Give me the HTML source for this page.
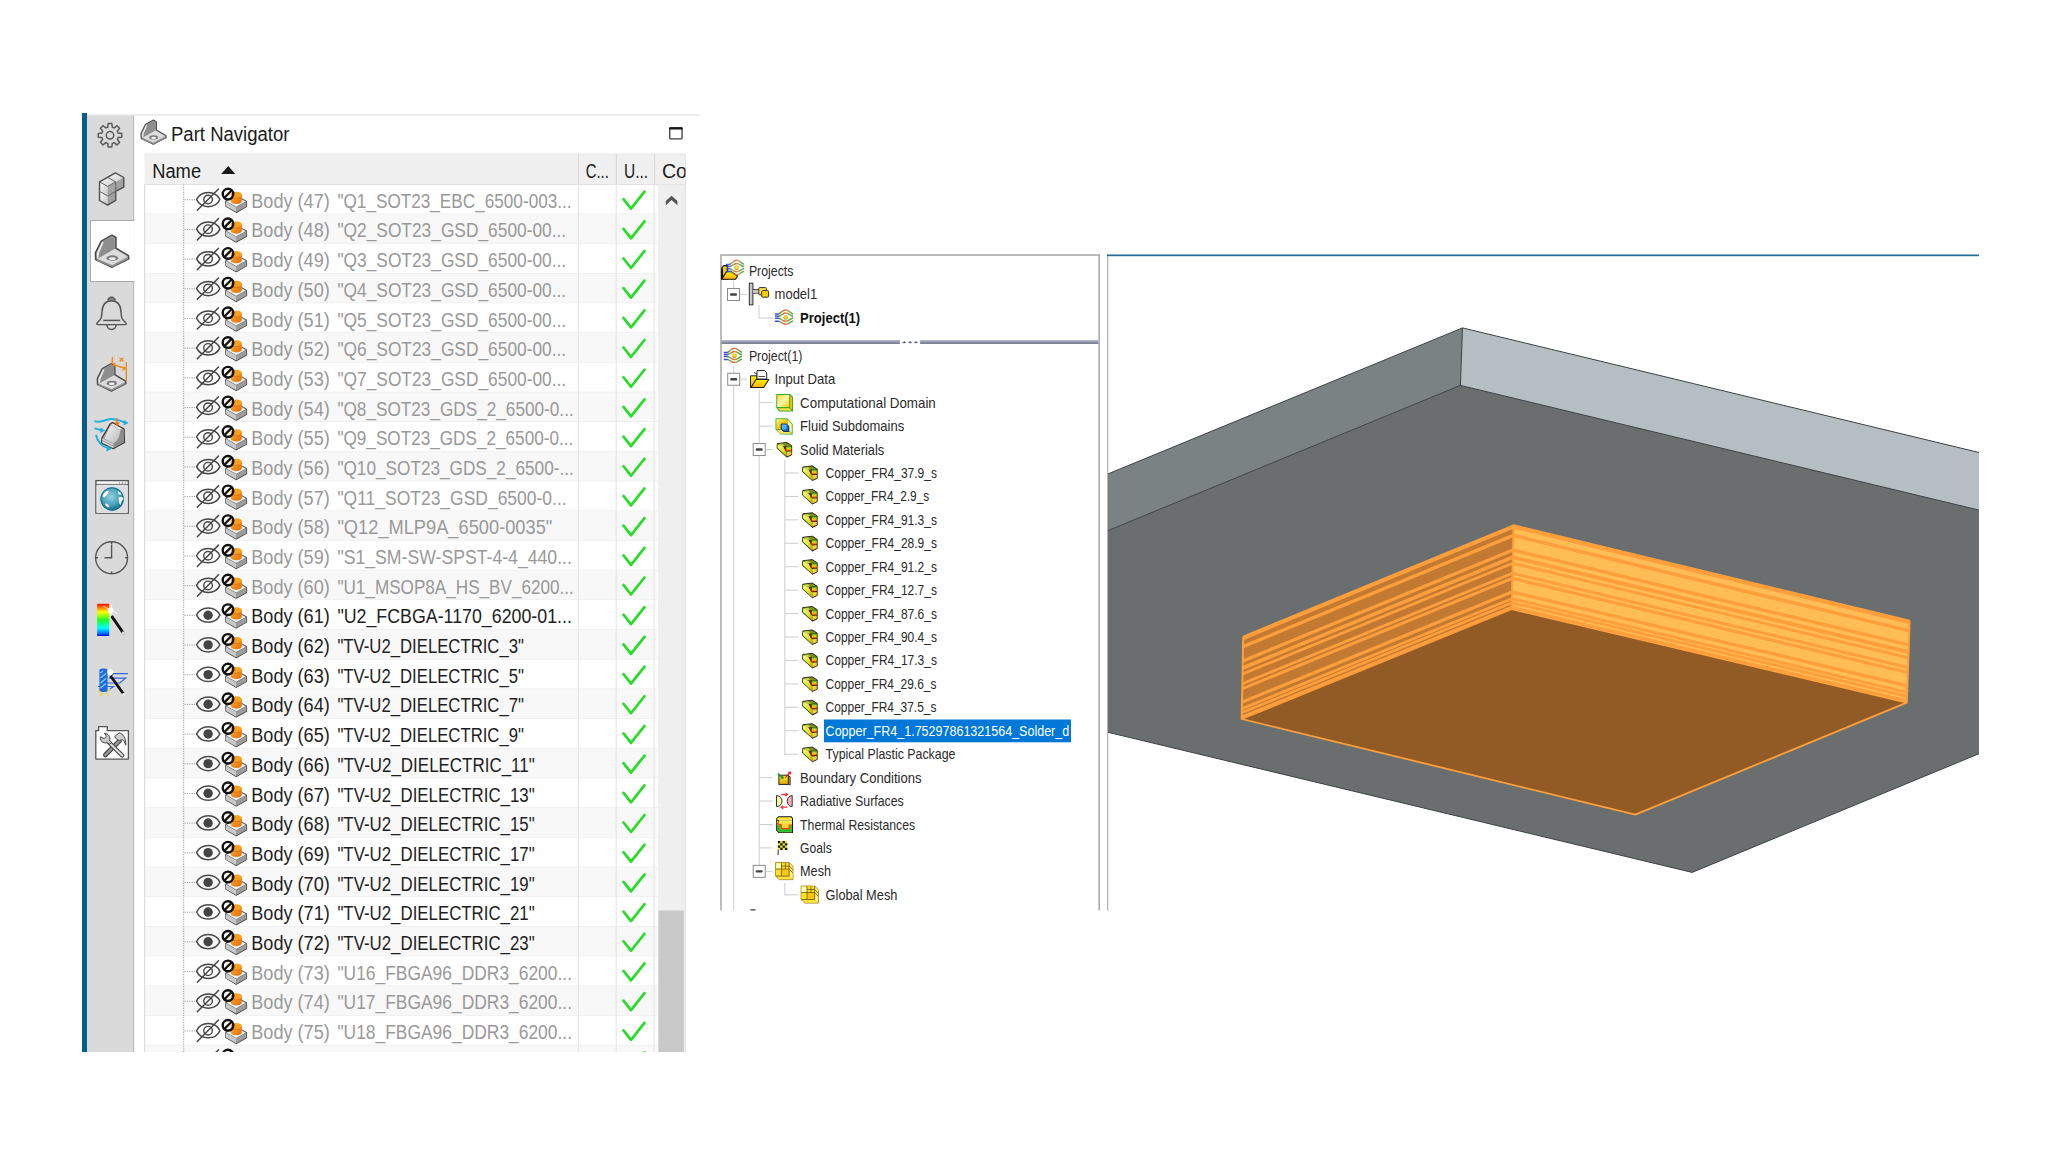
<!DOCTYPE html><html><head><meta charset="utf-8"><style>html,body{margin:0;padding:0;background:#fff;width:2048px;height:1152px;overflow:hidden}svg{display:block}text{font-family:'Liberation Sans', sans-serif}</style></head><body>
<svg width="2048" height="1152" viewBox="0 0 2048 1152" shape-rendering="geometricPrecision">

<defs>
 <linearGradient id="gOrange" x1="0" y1="0" x2="1" y2="1">
  <stop offset="0" stop-color="#ffb040"/><stop offset="1" stop-color="#e06a00"/>
 </linearGradient>
 <linearGradient id="gGrayTop" x1="0" y1="0" x2="1" y2="1">
  <stop offset="0" stop-color="#f4f4f4"/><stop offset="1" stop-color="#c8c8c8"/>
 </linearGradient>
 <linearGradient id="gYellow" x1="0" y1="0" x2="1" y2="1">
  <stop offset="0" stop-color="#fff8a0"/><stop offset="1" stop-color="#f0c000"/>
 </linearGradient>
 <linearGradient id="gGlobe" x1="0" y1="0" x2="1" y2="1">
  <stop offset="0" stop-color="#5fb8d0"/><stop offset="1" stop-color="#1a6f8a"/>
 </linearGradient>
 <linearGradient id="gRainbow" x1="0" y1="0" x2="0" y2="1">
  <stop offset="0" stop-color="#ff0000"/><stop offset="0.2" stop-color="#ffcc00"/>
  <stop offset="0.45" stop-color="#22ee22"/><stop offset="0.7" stop-color="#00d0ff"/>
  <stop offset="1" stop-color="#0020ff"/>
 </linearGradient>
 <!-- icons in absolute coords for row 0 (top=184.5) -->
 <g id="eyeH">
  <path d="M196.6,199.5 C201,190.0 215.5,190.0 219.9,199.5 C215.5,209.0 201,209.0 196.6,199.5 Z" fill="none" stroke="#444" stroke-width="1.5"/>
  <circle cx="208.05" cy="199.5" r="4.3" fill="none" stroke="#484848" stroke-width="1.4"/>
  <path d="M197.3,210.3 L218.5,188.9" stroke="#444" stroke-width="1.45" stroke-linecap="round"/>
 </g>
 <g id="eyeV">
  <path d="M196.6,199.5 C201,190.0 215.5,190.0 219.9,199.5 C215.5,209.0 201,209.0 196.6,199.5 Z" fill="none" stroke="#4a4a4a" stroke-width="1.5"/>
  <circle cx="208.1" cy="199.6" r="4.7" fill="#454545"/>
 </g>
 <g id="bodyIco">
  <path d="M225.8,201.3 L236,195.8 L246.5,201.5 L246.6,206.5 L236.2,212.4 L225.9,206.3 Z" fill="#9a9a9a" stroke="#3c3c3c" stroke-width="1.1" stroke-linejoin="round"/>
  <path d="M225.8,201.3 L236,195.8 L246.5,201.5 L236.2,207.2 Z" fill="#edf2f4" stroke="#555" stroke-width="0.7" stroke-linejoin="round"/>
  <path d="M225.9,201.6 L236.2,207.4 L236.2,212.1 L225.9,206.3 Z" fill="#c8c8c8"/>
  <path d="M236.2,207.4 L246.4,201.7 L246.5,206.4 L236.2,212.1 Z" fill="#9c9c9c"/>
  <path d="M230.8,194.5 L230.8,201.2 A5.5,2.8 0 0 0 241.8,201.2 L241.8,194.5 Z" fill="url(#gOrange)"/>
  <ellipse cx="236.3" cy="194.5" rx="5.5" ry="2.8" fill="#f9a020"/>
  <path d="M230.9,196.6 A5.5,2.4 0 0 0 241.7,196.6" fill="none" stroke="#d86f00" stroke-width="0.7"/>
  <circle cx="228.0" cy="194.1" r="5.3" fill="none" stroke="#111" stroke-width="2.4"/>
  <path d="M224.4,197.7 L231.6,190.5" stroke="#111" stroke-width="2.3"/>
 </g>
 <g id="check">
  <path d="M0.5,8 L8,17.5 L21.5,0.5" fill="none" stroke="#28dc28" stroke-width="2.7" stroke-linecap="round" stroke-linejoin="round"/>
 </g>
 <!-- material icon: origin so that bbox ~ (0,0)-(15,15.3) -->
 <linearGradient id="gMatL" x1="0" y1="0" x2="1" y2="1">
  <stop offset="0" stop-color="#f4ff90"/><stop offset="0.6" stop-color="#d8e820"/><stop offset="1" stop-color="#b0a000"/>
 </linearGradient>
 <linearGradient id="gMatF" x1="0" y1="0" x2="0" y2="1">
  <stop offset="0" stop-color="#108010"/><stop offset="0.35" stop-color="#a0d020"/><stop offset="0.6" stop-color="#ffd000"/><stop offset="0.85" stop-color="#f05000"/><stop offset="1" stop-color="#801000"/>
 </linearGradient>
 <g id="matIco">
  <path d="M0.6,1.3 L10.1,0.2 L15,3.4 L15,12.6 L10.2,14.9 L0.4,6.0 Z" fill="#1a1400" stroke="#1a1400" stroke-width="0.8" stroke-linejoin="round"/>
  <path d="M1,1.6 L10,0.7 L14.5,3.5 L6.8,4.2 Z" fill="#7a9020"/>
  <path d="M2,1.8 L6,1.4 L8,3.5 L4,3.8 Z" fill="#c8d840"/>
  <path d="M0.9,1.9 L6.6,4.3 L9.8,9.3 L9.8,14.3 L0.8,5.8 Z" fill="url(#gMatL)"/>
  <path d="M6.8,4.3 L9.3,3.9 L9.3,9.0 L8.8,9.0 Z" fill="#8a0c0c"/>
  <path d="M9.5,3.8 L14.6,3.5 L14.6,8.7 L9.5,9.0 Z" fill="url(#gMatF)"/>
  <path d="M9.9,9.5 L14.6,9.1 L14.6,12.3 L10.1,14.3 Z" fill="#f0d040"/>
 </g>
 <linearGradient id="gFold" x1="0" y1="0" x2="0" y2="1">
  <stop offset="0" stop-color="#fff200"/><stop offset="1" stop-color="#ffb000"/>
 </linearGradient>
 <g id="expander">
  <rect x="0.5" y="0.5" width="12" height="12" fill="#fff" stroke="#8a8a8a" stroke-width="1"/>
  <rect x="3" y="5.3" width="7" height="2.4" rx="1" fill="#444"/>
 </g>
 <linearGradient id="gStream" gradientUnits="userSpaceOnUse" x1="0" y1="0" x2="17.5" y2="0">
  <stop offset="0" stop-color="#4040e0"/><stop offset="0.17" stop-color="#4848e0"/><stop offset="0.24" stop-color="#40a040"/>
  <stop offset="0.38" stop-color="#a0b040"/><stop offset="0.5" stop-color="#f04838"/><stop offset="0.64" stop-color="#f08838"/><stop offset="0.82" stop-color="#60a848"/><stop offset="1" stop-color="#40a040"/>
 </linearGradient>
 <radialGradient id="gBall" cx="0.5" cy="0.45" r="0.5"><stop offset="0" stop-color="#ffff20"/><stop offset="0.6" stop-color="#f0d000"/><stop offset="1" stop-color="#b08000"/></radialGradient>
 <g id="projIco">
  <g fill="none" stroke="url(#gStream)" stroke-width="1.5" stroke-linecap="round">
   <path d="M0.3,4.1 L3,4.1 C5,4.1 7,-0.1 10.4,-0.1 C13.5,-0.1 15.5,3.2 17.3,3.7"/>
   <path d="M0.3,6.1 L3.2,6.2 C5.5,6.2 7.5,3.1 10.4,3.1 C13.5,3.1 15.5,5.8 17.3,6.2"/>
   <path d="M0.3,8.3 L3.2,8.3 C5.5,8.3 7.5,11.3 10.4,11.3 C13.5,11.3 15.5,8.6 17.3,8.3"/>
   <path d="M0.3,11.2 L3.2,11.2 C5.5,11.2 7.5,14.3 10.4,14.3 C13.5,14.3 15.5,11.6 17.3,11.1"/>
  </g>
  <circle cx="10.4" cy="7.4" r="2.2" fill="url(#gBall)"/>
 </g>
</defs>

<rect width="2048" height="1152" fill="#ffffff"/>
<rect x="87" y="114.4" width="613" height="1.2" fill="#e2e2e2"/>
<rect x="82" y="113" width="5" height="939" fill="#035f87"/>
<rect x="87" y="115.6" width="47" height="936.4" fill="#dadada"/>
<rect x="133" y="115.6" width="1.2" height="936.4" fill="#bdbdbd"/>
<path d="M134.5,220.5 L90.5,220.5 L90.5,281.5 L134.5,281.5" fill="#ffffff" stroke="#ababab" stroke-width="1"/>
<path d="M107.76,127.21 L108.14,123.55 L111.86,123.55 L112.24,127.21 A8.4,8.4 0 0 1 114.14,127.99 L114.14,127.99 L116.99,125.67 L119.63,128.31 L117.31,131.16 A8.4,8.4 0 0 1 118.09,133.06 L118.09,133.06 L121.75,133.44 L121.75,137.16 L118.09,137.54 A8.4,8.4 0 0 1 117.31,139.44 L117.31,139.44 L119.63,142.29 L116.99,144.93 L114.14,142.61 A8.4,8.4 0 0 1 112.24,143.39 L112.24,143.39 L111.86,147.05 L108.14,147.05 L107.76,143.39 A8.4,8.4 0 0 1 105.86,142.61 L105.86,142.61 L103.01,144.93 L100.37,142.29 L102.69,139.44 A8.4,8.4 0 0 1 101.91,137.54 L101.91,137.54 L98.25,137.16 L98.25,133.44 L101.91,133.06 A8.4,8.4 0 0 1 102.69,131.16 L102.69,131.16 L100.37,128.31 L103.01,125.67 L105.86,127.99 A8.4,8.4 0 0 1 107.76,127.21 Z" fill="none" stroke="#5a5a5a" stroke-width="1.45" stroke-linejoin="round"/><circle cx="110" cy="135.3" r="3.75" fill="none" stroke="#5a5a5a" stroke-width="1.45"/>
<g stroke-linejoin="round">
<linearGradient id="gCubeL" x1="0" y1="0" x2="1" y2="1"><stop offset="0" stop-color="#fafafa"/><stop offset="1" stop-color="#c8c8c8"/></linearGradient>
<linearGradient id="gCubeT" x1="0" y1="0" x2="1" y2="1"><stop offset="0" stop-color="#f4f4f4"/><stop offset="1" stop-color="#d2d2d2"/></linearGradient>
<path d="M99.5,181.9 L107.6,177.4 L115.7,181.9 L107.7,186.4 Z" fill="url(#gCubeT)"/>
<path d="M107.6,177.4 L115.4,172.8 L123.8,177.5 L115.7,181.9 Z" fill="url(#gCubeT)"/>
<path d="M99.5,181.9 L107.7,186.4 L107.7,195.9 L99.5,191.4 Z" fill="url(#gCubeL)"/>
<path d="M107.7,186.4 L115.7,181.9 L115.7,191.4 L107.7,195.9 Z" fill="#a4a4a4"/>
<path d="M115.7,181.9 L123.8,177.5 L123.8,187.1 L115.7,191.4 Z" fill="#a0a0a0"/>
<path d="M99.5,191.4 L107.7,195.9 L107.7,205.2 L99.5,200.5 Z" fill="url(#gCubeL)"/>
<path d="M107.7,195.9 L115.7,191.4 L115.8,200.3 L107.7,205.2 Z" fill="#a0a0a0"/>
<path d="M99.5,181.9 L115.4,172.8 L123.8,177.5 L123.8,187.1 L115.7,191.4 L115.8,200.3 L107.7,205.2 L99.5,200.5 Z" fill="none" stroke="#505050" stroke-width="1.4"/>
<path d="M107.6,177.4 L115.7,181.9 L107.7,186.4 L99.5,181.9 M115.7,181.9 L115.7,191.4 M99.5,191.4 L107.7,195.9 L115.7,191.4" fill="none" stroke="#686868" stroke-width="1"/>
</g>
<g transform="translate(95.3,235) scale(1.33)"><path d="M12.5,0.1 L15.5,1.9 L15.5,9.9 L24.9,15.5 L25.2,17.8 L15.7,22.5 L12.5,24.3 L0.3,18.4 L0.1,13.4 L4.5,4.6 Z" fill="#b8b8b8" stroke="#4a4a4a" stroke-width="1.2" stroke-linejoin="round"/>
<path d="M4.8,5 L12.6,0.9 L14.6,2.2 L14.6,10.6 L2.6,17.6 L1.2,13.6 Z" fill="#8e8e8e"/>
<path d="M1.3,13.3 L5,5.4 L6.4,5.3 L2.8,13.6 L2.4,17 L1.3,17 Z" fill="#eeeeee"/>
<path d="M1.6,17.8 L14.6,10.6 L24,16 L12.8,22.6 Z" fill="#dcdcdc"/>
<path d="M1,18.6 L12.6,23.5 L24.6,17.6" fill="none" stroke="#8a8a8a" stroke-width="1.2"/>
<ellipse cx="12.8" cy="17.4" rx="4.4" ry="2.1" fill="#7a7a7a"/>
<ellipse cx="12.8" cy="17.9" rx="2.5" ry="1.1" fill="#f4f4f4"/></g>
<g fill="none" stroke="#555" stroke-width="1.45" stroke-linejoin="round">
<path d="M107.9,300.6 A3.6,3.4 0 0 1 115.1,300.6" fill="#8a8a8a"/>
<path d="M111.5,300.8 C104.2,300.8 102.3,306 102,312 C101.7,317 101.4,318.8 98.5,321.6 C95.8,324.2 96.4,324.6 98.6,324.6 L124.4,324.6 C126.6,324.6 127.2,324.2 124.5,321.6 C121.6,318.8 121.3,317 121,312 C120.7,306 118.8,300.8 111.5,300.8 Z"/>
<path d="M103.2,320.4 L120.2,320.4" stroke-width="1.5"/>
<path d="M107,325 A4.5,4.4 0 0 0 116,325"/>
</g>
<g transform="translate(97.2,363.4) scale(1.14)"><path d="M12.5,0.1 L15.5,1.9 L15.5,9.9 L24.9,15.5 L25.2,17.8 L15.7,22.5 L12.5,24.3 L0.3,18.4 L0.1,13.4 L4.5,4.6 Z" fill="#b8b8b8" stroke="#4a4a4a" stroke-width="1.2" stroke-linejoin="round"/>
<path d="M4.8,5 L12.6,0.9 L14.6,2.2 L14.6,10.6 L2.6,17.6 L1.2,13.6 Z" fill="#8e8e8e"/>
<path d="M1.3,13.3 L5,5.4 L6.4,5.3 L2.8,13.6 L2.4,17 L1.3,17 Z" fill="#eeeeee"/>
<path d="M1.6,17.8 L14.6,10.6 L24,16 L12.8,22.6 Z" fill="#dcdcdc"/>
<path d="M1,18.6 L12.6,23.5 L24.6,17.6" fill="none" stroke="#8a8a8a" stroke-width="1.2"/>
<ellipse cx="12.8" cy="17.4" rx="4.4" ry="2.1" fill="#7a7a7a"/>
<ellipse cx="12.8" cy="17.9" rx="2.5" ry="1.1" fill="#f4f4f4"/></g>
<g stroke="#f08a20" stroke-width="1.4" fill="none">
<path d="M112.4,357 L112.4,364"/><path d="M126.3,362 L126.3,381"/>
<path d="M113,364.5 L125.5,368.5"/><path d="M113,364.5 L115.5,362.8 M113,364.5 L115.8,366.2 M125.5,368.5 L122.8,366.8 M125.5,368.5 L122.6,370.1"/>
<path d="M119.6,357.8 L123.4,361.4 M123.4,357.8 L119.6,361.4"/>
</g>
<g>
<linearGradient id="gFlowF" x1="0" y1="0" x2="1" y2="1"><stop offset="0" stop-color="#f8f8f8"/><stop offset="1" stop-color="#b8b8b8"/></linearGradient>
<path d="M110.2,423.9 L112.4,422.6 L124.1,429 L124.5,442.5 L113.2,448.7 L101.5,443.2 L101.9,438.1 Z" fill="#a8a8a8" stroke="#3a3a3a" stroke-width="1.2" stroke-linejoin="round"/>
<path d="M119.6,431 L123.6,429.6 L123.8,442 L113.6,447.8 L113.6,443.4 Z" fill="#8c8c8c"/>
<path d="M111.2,425.2 L120.2,430.4 C119.6,436 118.4,440.4 113.4,443.2 L104.6,438.6 C107,434 108.2,428.4 111.2,425.2 Z" fill="url(#gFlowF)"/>
<path d="M102.6,438.8 L113.2,444.4 L113.2,447.8 L102.4,442.6 Z" fill="#e4e4e4"/>
<path d="M102.6,440.6 L113.2,446" stroke="#666" stroke-width="0.7"/>
<path d="M111,424.4 L112.6,423.4 L121.6,428.6 L120,429.8 Z" fill="#ececec"/>
<path d="M95.2,421.4 C100,423.2 105,419.6 110.5,419 C115.5,418.6 120.5,420.6 125.5,422.8" fill="none" stroke="#22b0de" stroke-width="2" stroke-linecap="round"/>
<path d="M123.8,420 L128.6,423 L123.6,425.6 Z" fill="#22b0de"/>
<path d="M95.4,428.6 L102,430.2" stroke="#22b0de" stroke-width="2" stroke-linecap="round"/>
<path d="M100.6,427.4 L105.2,430.6 L100.2,433 Z" fill="#22b0de"/>
<path d="M96.2,435.4 C97.4,441.6 101.2,446.2 108.6,448.4" fill="none" stroke="#22b0de" stroke-width="2" stroke-linecap="round"/>
<path d="M107,445.8 L112.2,448.6 L106.4,451.8 Z" fill="#22b0de"/>
<path d="M117,418.2 L117,424" stroke="#f08020" stroke-width="1.8"/>
<path d="M114.2,422.4 L117,426.4 L119.8,422.4 Z" fill="#f07010"/>
</g>
<g>
<rect x="95.9" y="480.6" width="32.4" height="32.6" fill="#dedede" stroke="#555" stroke-width="1.3"/>
<rect x="97" y="481.6" width="30.2" height="2.6" fill="#f0f0f0"/>
<path d="M95.9,484.8 L128.3,484.8" stroke="#555" stroke-width="1.1"/>
<path d="M119,482.9 h1.2 M121.8,482.9 h1.2 M124.6,482.9 h1.2" stroke="#666" stroke-width="1"/>
<rect x="97" y="485.6" width="30.2" height="26.8" fill="none" stroke="#f2f2f2" stroke-width="0.8"/>
<radialGradient id="gGl2" cx="0.45" cy="0.4" r="0.6"><stop offset="0" stop-color="#9ad0e0"/><stop offset="0.6" stop-color="#4aa0bc"/><stop offset="1" stop-color="#126a8a"/></radialGradient>
<circle cx="112.1" cy="499" r="11.7" fill="url(#gGl2)"/>
<circle cx="112.1" cy="499" r="11.2" fill="none" stroke="#1a7090" stroke-width="1"/>
<path d="M102.5,496.5 C103.5,492.5 106,490.5 109,491 L107.5,494 L104.5,497.5 Z" fill="#ffffff"/>
<path d="M118.5,497.5 C120.5,496 123,496.5 123.5,499 L121.5,501.5 L120.5,505 L119,503 Z" fill="#e8f4f8"/>
<path d="M106,503 L109.5,506 L108,507.5 L105,505 Z" fill="#f0f8fa"/>
<path d="M117.5,491 L120.5,492.5 L121.5,495 L118.5,494.5 Z" fill="#d8eef4"/>
</g>
<g fill="none" stroke="#555" stroke-width="1.4">
<circle cx="111.6" cy="557.7" r="16"/>
<path d="M111.6,544.5 L111.6,557.7 L104.5,557.7"/>
<path d="M111.6,541.7 L111.6,544 M111.6,571.4 L111.6,573.7 M95.6,557.7 L98,557.7 M125.2,557.7 L127.6,557.7"/>
</g>
<linearGradient id="gRb2" x1="0" y1="0" x2="0" y2="1">
<stop offset="0" stop-color="#ff1000"/><stop offset="0.13" stop-color="#ff8000"/><stop offset="0.25" stop-color="#ffff00"/>
<stop offset="0.5" stop-color="#20ff20"/><stop offset="0.75" stop-color="#00ffff"/><stop offset="0.9" stop-color="#0080ff"/><stop offset="1" stop-color="#0010f0"/></linearGradient>
<rect x="97.1" y="603.8" width="12.1" height="32.2" fill="url(#gRb2)"/>
<path d="M111.5,616 L123,632.5" stroke="#111" stroke-width="3" stroke-linecap="butt"/>
<circle cx="123.4" cy="633.2" r="1.6" fill="#f0f0f0" stroke="#999" stroke-width="0.6"/>
<circle cx="110.8" cy="610.5" r="3" fill="#ffffff" opacity="0.95"/>
<path d="M103,606 L118,614 M112,604 L110,618" stroke="#ffffff" stroke-width="1" opacity="0.7"/>
<g>
<path d="M113.5,673.6 L128,673.6 M113.5,673.6 L109.5,678.2 L125.6,678.2 L119.8,683 L106.6,683 M108.2,686.5 L98,686.5 M108.2,686.5 L113.5,686.5 L110,689" fill="none" stroke="#3068d8" stroke-width="1.2"/>
<path d="M99.4,670 C99.4,668 107.6,668 107.6,670 L107.6,690.5 C107.6,692.5 99.4,692.5 99.4,690.5 Z" fill="#2468e0"/>
<path d="M100.5,673 L103,671 M100.5,678 L106,673.5 M100.5,683 L106,678.5 M100.5,688 L106,683.5" stroke="#70d8ff" stroke-width="1.3"/>
<path d="M110.6,676 L123.6,694" stroke="#111" stroke-width="2.8"/>
<circle cx="123.6" cy="694.4" r="1.4" fill="#f4f4f4"/>
<circle cx="110.2" cy="672" r="3" fill="#ffffff" opacity="0.9"/>
<path d="M98,690.5 L101,692 M100,695.5 L103,693 M106,693 L108.5,695.5 M108,691 L110.5,690" stroke="#f0d020" stroke-width="1.3"/>
</g>
<g>
<path d="M95.8,730.6 L98.6,730.6 L98.6,726.6 L107.3,726.6 L107.3,730.6 L128.4,730.6 L128.4,759.1 L95.8,759.1 Z" fill="#ffffff" stroke="#555" stroke-width="1.3" stroke-linejoin="round"/>
<path d="M105.3,755 L119.5,740.8" stroke="#444" stroke-width="4.6" stroke-linecap="round"/>
<path d="M105.3,755 L119.5,740.8" stroke="#9a9a9a" stroke-width="2.4" stroke-linecap="round"/>
<path d="M108.5,742 L122.2,755.5" stroke="#444" stroke-width="4.4" stroke-linecap="round"/>
<path d="M108.5,742 L122.2,755.5" stroke="#dcdcdc" stroke-width="2.2" stroke-linecap="round"/>
<path d="M100.4,736.8 C99.8,741.2 103.2,743.8 107,742.6 L109.6,744.4 L111.4,742.4 L109.6,740.6 C110.8,737 108.6,733.6 104.4,733.2 L106.4,736.2 L104.2,738.6 Z" fill="#c8c8c8" stroke="#444" stroke-width="1"/>
<path d="M114.6,736.6 L119.2,732.8 C123,734 126,737.5 125.8,745.2 L123.8,740.6 C122,739.2 120.5,739.5 119.6,740.8 L116.6,739.2 Z" fill="#d0d0d0" stroke="#444" stroke-width="1"/>
</g>
<g transform="translate(140.9,120)"><path d="M12.5,0.1 L15.5,1.9 L15.5,9.9 L24.9,15.5 L25.2,17.8 L15.7,22.5 L12.5,24.3 L0.3,18.4 L0.1,13.4 L4.5,4.6 Z" fill="#b8b8b8" stroke="#4a4a4a" stroke-width="1.2" stroke-linejoin="round"/>
<path d="M4.8,5 L12.6,0.9 L14.6,2.2 L14.6,10.6 L2.6,17.6 L1.2,13.6 Z" fill="#8e8e8e"/>
<path d="M1.3,13.3 L5,5.4 L6.4,5.3 L2.8,13.6 L2.4,17 L1.3,17 Z" fill="#eeeeee"/>
<path d="M1.6,17.8 L14.6,10.6 L24,16 L12.8,22.6 Z" fill="#dcdcdc"/>
<path d="M1,18.6 L12.6,23.5 L24.6,17.6" fill="none" stroke="#8a8a8a" stroke-width="1.2"/>
<ellipse cx="12.8" cy="17.4" rx="4.4" ry="2.1" fill="#7a7a7a"/>
<ellipse cx="12.8" cy="17.9" rx="2.5" ry="1.1" fill="#f4f4f4"/></g>
<text x="171" y="140.6" font-size="19.6" fill="#1a1a1a" textLength="118.5" lengthAdjust="spacingAndGlyphs">Part Navigator</text>
<rect x="669.75" y="127.85" width="12.3" height="11.1" rx="1" fill="none" stroke="#3a3a3a" stroke-width="1.3"/><rect x="669.1" y="127.2" width="13.6" height="2.3" rx="0.8" fill="#151515"/>
<rect x="144.5" y="154" width="541" height="30.5" fill="#f0f0f0"/>
<rect x="144.5" y="153.6" width="541" height="1" fill="#e4e4e4"/><rect x="684.9" y="154" width="1" height="30.5" fill="#e4e4e4"/>
<rect x="144.5" y="184" width="541" height="1.8" fill="#d9d9d9"/>
<rect x="577.8" y="154" width="1.2" height="30" fill="#dadada"/>
<rect x="615.8" y="154" width="1.2" height="30" fill="#dadada"/>
<rect x="654.0" y="154" width="1.2" height="30" fill="#dadada"/>
<text x="152.2" y="177.9" font-size="19.6" fill="#1a1a1a" textLength="48.9" lengthAdjust="spacingAndGlyphs">Name</text>
<path d="M221.2,173.9 L228.25,166 L235.3,173.9 Z" fill="#1a1a1a"/>
<text x="585.7" y="177.9" font-size="19.6" fill="#1a1a1a" textLength="23.1" lengthAdjust="spacingAndGlyphs">C...</text>
<text x="624" y="177.9" font-size="19.6" fill="#1a1a1a" textLength="24.1" lengthAdjust="spacingAndGlyphs">U...</text>
<clipPath id="cpCo"><rect x="655" y="150" width="30.5" height="40"/></clipPath>
<text x="661.9" y="177.9" font-size="19.6" fill="#1a1a1a" clip-path="url(#cpCo)">Co</text>
<clipPath id="cpRows"><rect x="144" y="184.5" width="542" height="867.5"/></clipPath>
<g clip-path="url(#cpRows)">
<rect x="144.5" y="184.50" width="513" height="29.686" fill="#ffffff"/>
<rect x="144.5" y="213.59" width="513" height="1.2" fill="#ebebeb"/>
<rect x="144.5" y="214.19" width="513" height="29.686" fill="#f8f8f8"/>
<rect x="144.5" y="243.27" width="513" height="1.2" fill="#ebebeb"/>
<rect x="144.5" y="243.87" width="513" height="29.686" fill="#ffffff"/>
<rect x="144.5" y="272.96" width="513" height="1.2" fill="#ebebeb"/>
<rect x="144.5" y="273.56" width="513" height="29.686" fill="#f8f8f8"/>
<rect x="144.5" y="302.64" width="513" height="1.2" fill="#ebebeb"/>
<rect x="144.5" y="303.24" width="513" height="29.686" fill="#ffffff"/>
<rect x="144.5" y="332.33" width="513" height="1.2" fill="#ebebeb"/>
<rect x="144.5" y="332.93" width="513" height="29.686" fill="#f8f8f8"/>
<rect x="144.5" y="362.02" width="513" height="1.2" fill="#ebebeb"/>
<rect x="144.5" y="362.62" width="513" height="29.686" fill="#ffffff"/>
<rect x="144.5" y="391.70" width="513" height="1.2" fill="#ebebeb"/>
<rect x="144.5" y="392.30" width="513" height="29.686" fill="#f8f8f8"/>
<rect x="144.5" y="421.39" width="513" height="1.2" fill="#ebebeb"/>
<rect x="144.5" y="421.99" width="513" height="29.686" fill="#ffffff"/>
<rect x="144.5" y="451.07" width="513" height="1.2" fill="#ebebeb"/>
<rect x="144.5" y="451.67" width="513" height="29.686" fill="#f8f8f8"/>
<rect x="144.5" y="480.76" width="513" height="1.2" fill="#ebebeb"/>
<rect x="144.5" y="481.36" width="513" height="29.686" fill="#ffffff"/>
<rect x="144.5" y="510.45" width="513" height="1.2" fill="#ebebeb"/>
<rect x="144.5" y="511.05" width="513" height="29.686" fill="#f8f8f8"/>
<rect x="144.5" y="540.13" width="513" height="1.2" fill="#ebebeb"/>
<rect x="144.5" y="540.73" width="513" height="29.686" fill="#ffffff"/>
<rect x="144.5" y="569.82" width="513" height="1.2" fill="#ebebeb"/>
<rect x="144.5" y="570.42" width="513" height="29.686" fill="#f8f8f8"/>
<rect x="144.5" y="599.50" width="513" height="1.2" fill="#ebebeb"/>
<rect x="144.5" y="600.10" width="513" height="29.686" fill="#ffffff"/>
<rect x="144.5" y="629.19" width="513" height="1.2" fill="#ebebeb"/>
<rect x="144.5" y="629.79" width="513" height="29.686" fill="#f8f8f8"/>
<rect x="144.5" y="658.88" width="513" height="1.2" fill="#ebebeb"/>
<rect x="144.5" y="659.48" width="513" height="29.686" fill="#ffffff"/>
<rect x="144.5" y="688.56" width="513" height="1.2" fill="#ebebeb"/>
<rect x="144.5" y="689.16" width="513" height="29.686" fill="#f8f8f8"/>
<rect x="144.5" y="718.25" width="513" height="1.2" fill="#ebebeb"/>
<rect x="144.5" y="718.85" width="513" height="29.686" fill="#ffffff"/>
<rect x="144.5" y="747.93" width="513" height="1.2" fill="#ebebeb"/>
<rect x="144.5" y="748.53" width="513" height="29.686" fill="#f8f8f8"/>
<rect x="144.5" y="777.62" width="513" height="1.2" fill="#ebebeb"/>
<rect x="144.5" y="778.22" width="513" height="29.686" fill="#ffffff"/>
<rect x="144.5" y="807.31" width="513" height="1.2" fill="#ebebeb"/>
<rect x="144.5" y="807.91" width="513" height="29.686" fill="#f8f8f8"/>
<rect x="144.5" y="836.99" width="513" height="1.2" fill="#ebebeb"/>
<rect x="144.5" y="837.59" width="513" height="29.686" fill="#ffffff"/>
<rect x="144.5" y="866.68" width="513" height="1.2" fill="#ebebeb"/>
<rect x="144.5" y="867.28" width="513" height="29.686" fill="#f8f8f8"/>
<rect x="144.5" y="896.36" width="513" height="1.2" fill="#ebebeb"/>
<rect x="144.5" y="896.96" width="513" height="29.686" fill="#ffffff"/>
<rect x="144.5" y="926.05" width="513" height="1.2" fill="#ebebeb"/>
<rect x="144.5" y="926.65" width="513" height="29.686" fill="#f8f8f8"/>
<rect x="144.5" y="955.74" width="513" height="1.2" fill="#ebebeb"/>
<rect x="144.5" y="956.34" width="513" height="29.686" fill="#ffffff"/>
<rect x="144.5" y="985.42" width="513" height="1.2" fill="#ebebeb"/>
<rect x="144.5" y="986.02" width="513" height="29.686" fill="#f8f8f8"/>
<rect x="144.5" y="1015.11" width="513" height="1.2" fill="#ebebeb"/>
<rect x="144.5" y="1015.71" width="513" height="29.686" fill="#ffffff"/>
<rect x="144.5" y="1044.79" width="513" height="1.2" fill="#ebebeb"/>
<rect x="144.5" y="1045.39" width="513" height="29.686" fill="#f8f8f8"/>
<rect x="144.5" y="1074.48" width="513" height="1.2" fill="#ebebeb"/>
<rect x="577.8" y="184.5" width="1.2" height="868" fill="#e6e6e6"/>
<rect x="615.6" y="184.5" width="1.2" height="868" fill="#e6e6e6"/>
<rect x="653.5" y="184.5" width="1.2" height="868" fill="#e6e6e6"/>
<rect x="144" y="154" width="1.2" height="898" fill="#dcdcdc"/>
<path d="M183.7,184.5 L183.7,1052" stroke="#9a9a9a" stroke-width="1" stroke-dasharray="1.2,1.2"/>
<path d="M184.5,199.75 L195,199.75" stroke="#9a9a9a" stroke-width="1" stroke-dasharray="1.2,1.2"/>
<use href="#eyeH" y="0.000"/>
<use href="#bodyIco" y="0.000"/>
<text x="251.3" y="207.80" font-size="20.3" fill="#999999" textLength="78.5" lengthAdjust="spacingAndGlyphs">Body (47)</text>
<text x="337.4" y="207.80" font-size="20.3" fill="#999999" textLength="234.2" lengthAdjust="spacingAndGlyphs">&quot;Q1_SOT23_EBC_6500-003...</text>
<use href="#check" x="623" y="191.10"/>
<path d="M184.5,229.44 L195,229.44" stroke="#9a9a9a" stroke-width="1" stroke-dasharray="1.2,1.2"/>
<use href="#eyeH" y="29.686"/>
<use href="#bodyIco" y="29.686"/>
<text x="251.3" y="237.49" font-size="20.3" fill="#999999" textLength="78.5" lengthAdjust="spacingAndGlyphs">Body (48)</text>
<text x="337.4" y="237.49" font-size="20.3" fill="#999999" textLength="228.8" lengthAdjust="spacingAndGlyphs">&quot;Q2_SOT23_GSD_6500-00...</text>
<use href="#check" x="623" y="220.79"/>
<path d="M184.5,259.12 L195,259.12" stroke="#9a9a9a" stroke-width="1" stroke-dasharray="1.2,1.2"/>
<use href="#eyeH" y="59.372"/>
<use href="#bodyIco" y="59.372"/>
<text x="251.3" y="267.17" font-size="20.3" fill="#999999" textLength="78.5" lengthAdjust="spacingAndGlyphs">Body (49)</text>
<text x="337.4" y="267.17" font-size="20.3" fill="#999999" textLength="228.8" lengthAdjust="spacingAndGlyphs">&quot;Q3_SOT23_GSD_6500-00...</text>
<use href="#check" x="623" y="250.47"/>
<path d="M184.5,288.81 L195,288.81" stroke="#9a9a9a" stroke-width="1" stroke-dasharray="1.2,1.2"/>
<use href="#eyeH" y="89.058"/>
<use href="#bodyIco" y="89.058"/>
<text x="251.3" y="296.86" font-size="20.3" fill="#999999" textLength="78.5" lengthAdjust="spacingAndGlyphs">Body (50)</text>
<text x="337.4" y="296.86" font-size="20.3" fill="#999999" textLength="228.8" lengthAdjust="spacingAndGlyphs">&quot;Q4_SOT23_GSD_6500-00...</text>
<use href="#check" x="623" y="280.16"/>
<path d="M184.5,318.49 L195,318.49" stroke="#9a9a9a" stroke-width="1" stroke-dasharray="1.2,1.2"/>
<use href="#eyeH" y="118.744"/>
<use href="#bodyIco" y="118.744"/>
<text x="251.3" y="326.54" font-size="20.3" fill="#999999" textLength="78.5" lengthAdjust="spacingAndGlyphs">Body (51)</text>
<text x="337.4" y="326.54" font-size="20.3" fill="#999999" textLength="228.8" lengthAdjust="spacingAndGlyphs">&quot;Q5_SOT23_GSD_6500-00...</text>
<use href="#check" x="623" y="309.84"/>
<path d="M184.5,348.18 L195,348.18" stroke="#9a9a9a" stroke-width="1" stroke-dasharray="1.2,1.2"/>
<use href="#eyeH" y="148.430"/>
<use href="#bodyIco" y="148.430"/>
<text x="251.3" y="356.23" font-size="20.3" fill="#999999" textLength="78.5" lengthAdjust="spacingAndGlyphs">Body (52)</text>
<text x="337.4" y="356.23" font-size="20.3" fill="#999999" textLength="228.8" lengthAdjust="spacingAndGlyphs">&quot;Q6_SOT23_GSD_6500-00...</text>
<use href="#check" x="623" y="339.53"/>
<path d="M184.5,377.87 L195,377.87" stroke="#9a9a9a" stroke-width="1" stroke-dasharray="1.2,1.2"/>
<use href="#eyeH" y="178.116"/>
<use href="#bodyIco" y="178.116"/>
<text x="251.3" y="385.92" font-size="20.3" fill="#999999" textLength="78.5" lengthAdjust="spacingAndGlyphs">Body (53)</text>
<text x="337.4" y="385.92" font-size="20.3" fill="#999999" textLength="228.8" lengthAdjust="spacingAndGlyphs">&quot;Q7_SOT23_GSD_6500-00...</text>
<use href="#check" x="623" y="369.22"/>
<path d="M184.5,407.55 L195,407.55" stroke="#9a9a9a" stroke-width="1" stroke-dasharray="1.2,1.2"/>
<use href="#eyeH" y="207.802"/>
<use href="#bodyIco" y="207.802"/>
<text x="251.3" y="415.60" font-size="20.3" fill="#999999" textLength="78.5" lengthAdjust="spacingAndGlyphs">Body (54)</text>
<text x="337.4" y="415.60" font-size="20.3" fill="#999999" textLength="236.3" lengthAdjust="spacingAndGlyphs">&quot;Q8_SOT23_GDS_2_6500-0...</text>
<use href="#check" x="623" y="398.90"/>
<path d="M184.5,437.24 L195,437.24" stroke="#9a9a9a" stroke-width="1" stroke-dasharray="1.2,1.2"/>
<use href="#eyeH" y="237.488"/>
<use href="#bodyIco" y="237.488"/>
<text x="251.3" y="445.29" font-size="20.3" fill="#999999" textLength="78.5" lengthAdjust="spacingAndGlyphs">Body (55)</text>
<text x="337.4" y="445.29" font-size="20.3" fill="#999999" textLength="235.9" lengthAdjust="spacingAndGlyphs">&quot;Q9_SOT23_GDS_2_6500-0...</text>
<use href="#check" x="623" y="428.59"/>
<path d="M184.5,466.92 L195,466.92" stroke="#9a9a9a" stroke-width="1" stroke-dasharray="1.2,1.2"/>
<use href="#eyeH" y="267.174"/>
<use href="#bodyIco" y="267.174"/>
<text x="251.3" y="474.97" font-size="20.3" fill="#999999" textLength="78.5" lengthAdjust="spacingAndGlyphs">Body (56)</text>
<text x="337.4" y="474.97" font-size="20.3" fill="#999999" textLength="236.4" lengthAdjust="spacingAndGlyphs">&quot;Q10_SOT23_GDS_2_6500-...</text>
<use href="#check" x="623" y="458.27"/>
<path d="M184.5,496.61 L195,496.61" stroke="#9a9a9a" stroke-width="1" stroke-dasharray="1.2,1.2"/>
<use href="#eyeH" y="296.860"/>
<use href="#bodyIco" y="296.860"/>
<text x="251.3" y="504.66" font-size="20.3" fill="#999999" textLength="78.5" lengthAdjust="spacingAndGlyphs">Body (57)</text>
<text x="337.4" y="504.66" font-size="20.3" fill="#999999" textLength="229.2" lengthAdjust="spacingAndGlyphs">&quot;Q11_SOT23_GSD_6500-0...</text>
<use href="#check" x="623" y="487.96"/>
<path d="M184.5,526.30 L195,526.30" stroke="#9a9a9a" stroke-width="1" stroke-dasharray="1.2,1.2"/>
<use href="#eyeH" y="326.546"/>
<use href="#bodyIco" y="326.546"/>
<text x="251.3" y="534.35" font-size="20.3" fill="#999999" textLength="78.5" lengthAdjust="spacingAndGlyphs">Body (58)</text>
<text x="337.4" y="534.35" font-size="20.3" fill="#999999" textLength="214.9" lengthAdjust="spacingAndGlyphs">&quot;Q12_MLP9A_6500-0035&quot;</text>
<use href="#check" x="623" y="517.65"/>
<path d="M184.5,555.98 L195,555.98" stroke="#9a9a9a" stroke-width="1" stroke-dasharray="1.2,1.2"/>
<use href="#eyeH" y="356.232"/>
<use href="#bodyIco" y="356.232"/>
<text x="251.3" y="564.03" font-size="20.3" fill="#999999" textLength="78.5" lengthAdjust="spacingAndGlyphs">Body (59)</text>
<text x="337.4" y="564.03" font-size="20.3" fill="#999999" textLength="234.5" lengthAdjust="spacingAndGlyphs">&quot;S1_SM-SW-SPST-4-4_440...</text>
<use href="#check" x="623" y="547.33"/>
<path d="M184.5,585.67 L195,585.67" stroke="#9a9a9a" stroke-width="1" stroke-dasharray="1.2,1.2"/>
<use href="#eyeH" y="385.918"/>
<use href="#bodyIco" y="385.918"/>
<text x="251.3" y="593.72" font-size="20.3" fill="#999999" textLength="78.5" lengthAdjust="spacingAndGlyphs">Body (60)</text>
<text x="337.4" y="593.72" font-size="20.3" fill="#999999" textLength="236.4" lengthAdjust="spacingAndGlyphs">&quot;U1_MSOP8A_HS_BV_6200...</text>
<use href="#check" x="623" y="577.02"/>
<path d="M184.5,615.35 L195,615.35" stroke="#9a9a9a" stroke-width="1" stroke-dasharray="1.2,1.2"/>
<use href="#eyeV" y="415.604"/>
<use href="#bodyIco" y="415.604"/>
<text x="251.3" y="623.40" font-size="20.3" fill="#1e1e1e" textLength="78.5" lengthAdjust="spacingAndGlyphs">Body (61)</text>
<text x="337.4" y="623.40" font-size="20.3" fill="#1e1e1e" textLength="234.5" lengthAdjust="spacingAndGlyphs">&quot;U2_FCBGA-1170_6200-01...</text>
<use href="#check" x="623" y="606.70"/>
<path d="M184.5,645.04 L195,645.04" stroke="#9a9a9a" stroke-width="1" stroke-dasharray="1.2,1.2"/>
<use href="#eyeV" y="445.290"/>
<use href="#bodyIco" y="445.290"/>
<text x="251.3" y="653.09" font-size="20.3" fill="#1e1e1e" textLength="78.5" lengthAdjust="spacingAndGlyphs">Body (62)</text>
<text x="337.4" y="653.09" font-size="20.3" fill="#1e1e1e" textLength="186.6" lengthAdjust="spacingAndGlyphs">&quot;TV-U2_DIELECTRIC_3&quot;</text>
<use href="#check" x="623" y="636.39"/>
<path d="M184.5,674.73 L195,674.73" stroke="#9a9a9a" stroke-width="1" stroke-dasharray="1.2,1.2"/>
<use href="#eyeV" y="474.976"/>
<use href="#bodyIco" y="474.976"/>
<text x="251.3" y="682.78" font-size="20.3" fill="#1e1e1e" textLength="78.5" lengthAdjust="spacingAndGlyphs">Body (63)</text>
<text x="337.4" y="682.78" font-size="20.3" fill="#1e1e1e" textLength="186.6" lengthAdjust="spacingAndGlyphs">&quot;TV-U2_DIELECTRIC_5&quot;</text>
<use href="#check" x="623" y="666.08"/>
<path d="M184.5,704.41 L195,704.41" stroke="#9a9a9a" stroke-width="1" stroke-dasharray="1.2,1.2"/>
<use href="#eyeV" y="504.662"/>
<use href="#bodyIco" y="504.662"/>
<text x="251.3" y="712.46" font-size="20.3" fill="#1e1e1e" textLength="78.5" lengthAdjust="spacingAndGlyphs">Body (64)</text>
<text x="337.4" y="712.46" font-size="20.3" fill="#1e1e1e" textLength="186.6" lengthAdjust="spacingAndGlyphs">&quot;TV-U2_DIELECTRIC_7&quot;</text>
<use href="#check" x="623" y="695.76"/>
<path d="M184.5,734.10 L195,734.10" stroke="#9a9a9a" stroke-width="1" stroke-dasharray="1.2,1.2"/>
<use href="#eyeV" y="534.348"/>
<use href="#bodyIco" y="534.348"/>
<text x="251.3" y="742.15" font-size="20.3" fill="#1e1e1e" textLength="78.5" lengthAdjust="spacingAndGlyphs">Body (65)</text>
<text x="337.4" y="742.15" font-size="20.3" fill="#1e1e1e" textLength="186.6" lengthAdjust="spacingAndGlyphs">&quot;TV-U2_DIELECTRIC_9&quot;</text>
<use href="#check" x="623" y="725.45"/>
<path d="M184.5,763.78 L195,763.78" stroke="#9a9a9a" stroke-width="1" stroke-dasharray="1.2,1.2"/>
<use href="#eyeV" y="564.034"/>
<use href="#bodyIco" y="564.034"/>
<text x="251.3" y="771.83" font-size="20.3" fill="#1e1e1e" textLength="78.5" lengthAdjust="spacingAndGlyphs">Body (66)</text>
<text x="337.4" y="771.83" font-size="20.3" fill="#1e1e1e" textLength="197.3" lengthAdjust="spacingAndGlyphs">&quot;TV-U2_DIELECTRIC_11&quot;</text>
<use href="#check" x="623" y="755.13"/>
<path d="M184.5,793.47 L195,793.47" stroke="#9a9a9a" stroke-width="1" stroke-dasharray="1.2,1.2"/>
<use href="#eyeV" y="593.720"/>
<use href="#bodyIco" y="593.720"/>
<text x="251.3" y="801.52" font-size="20.3" fill="#1e1e1e" textLength="78.5" lengthAdjust="spacingAndGlyphs">Body (67)</text>
<text x="337.4" y="801.52" font-size="20.3" fill="#1e1e1e" textLength="197.3" lengthAdjust="spacingAndGlyphs">&quot;TV-U2_DIELECTRIC_13&quot;</text>
<use href="#check" x="623" y="784.82"/>
<path d="M184.5,823.16 L195,823.16" stroke="#9a9a9a" stroke-width="1" stroke-dasharray="1.2,1.2"/>
<use href="#eyeV" y="623.406"/>
<use href="#bodyIco" y="623.406"/>
<text x="251.3" y="831.21" font-size="20.3" fill="#1e1e1e" textLength="78.5" lengthAdjust="spacingAndGlyphs">Body (68)</text>
<text x="337.4" y="831.21" font-size="20.3" fill="#1e1e1e" textLength="197.3" lengthAdjust="spacingAndGlyphs">&quot;TV-U2_DIELECTRIC_15&quot;</text>
<use href="#check" x="623" y="814.51"/>
<path d="M184.5,852.84 L195,852.84" stroke="#9a9a9a" stroke-width="1" stroke-dasharray="1.2,1.2"/>
<use href="#eyeV" y="653.092"/>
<use href="#bodyIco" y="653.092"/>
<text x="251.3" y="860.89" font-size="20.3" fill="#1e1e1e" textLength="78.5" lengthAdjust="spacingAndGlyphs">Body (69)</text>
<text x="337.4" y="860.89" font-size="20.3" fill="#1e1e1e" textLength="197.3" lengthAdjust="spacingAndGlyphs">&quot;TV-U2_DIELECTRIC_17&quot;</text>
<use href="#check" x="623" y="844.19"/>
<path d="M184.5,882.53 L195,882.53" stroke="#9a9a9a" stroke-width="1" stroke-dasharray="1.2,1.2"/>
<use href="#eyeV" y="682.778"/>
<use href="#bodyIco" y="682.778"/>
<text x="251.3" y="890.58" font-size="20.3" fill="#1e1e1e" textLength="78.5" lengthAdjust="spacingAndGlyphs">Body (70)</text>
<text x="337.4" y="890.58" font-size="20.3" fill="#1e1e1e" textLength="197.3" lengthAdjust="spacingAndGlyphs">&quot;TV-U2_DIELECTRIC_19&quot;</text>
<use href="#check" x="623" y="873.88"/>
<path d="M184.5,912.21 L195,912.21" stroke="#9a9a9a" stroke-width="1" stroke-dasharray="1.2,1.2"/>
<use href="#eyeV" y="712.464"/>
<use href="#bodyIco" y="712.464"/>
<text x="251.3" y="920.26" font-size="20.3" fill="#1e1e1e" textLength="78.5" lengthAdjust="spacingAndGlyphs">Body (71)</text>
<text x="337.4" y="920.26" font-size="20.3" fill="#1e1e1e" textLength="197.3" lengthAdjust="spacingAndGlyphs">&quot;TV-U2_DIELECTRIC_21&quot;</text>
<use href="#check" x="623" y="903.56"/>
<path d="M184.5,941.90 L195,941.90" stroke="#9a9a9a" stroke-width="1" stroke-dasharray="1.2,1.2"/>
<use href="#eyeV" y="742.150"/>
<use href="#bodyIco" y="742.150"/>
<text x="251.3" y="949.95" font-size="20.3" fill="#1e1e1e" textLength="78.5" lengthAdjust="spacingAndGlyphs">Body (72)</text>
<text x="337.4" y="949.95" font-size="20.3" fill="#1e1e1e" textLength="197.3" lengthAdjust="spacingAndGlyphs">&quot;TV-U2_DIELECTRIC_23&quot;</text>
<use href="#check" x="623" y="933.25"/>
<path d="M184.5,971.59 L195,971.59" stroke="#9a9a9a" stroke-width="1" stroke-dasharray="1.2,1.2"/>
<use href="#eyeH" y="771.836"/>
<use href="#bodyIco" y="771.836"/>
<text x="251.3" y="979.64" font-size="20.3" fill="#999999" textLength="78.5" lengthAdjust="spacingAndGlyphs">Body (73)</text>
<text x="337.4" y="979.64" font-size="20.3" fill="#999999" textLength="234.6" lengthAdjust="spacingAndGlyphs">&quot;U16_FBGA96_DDR3_6200...</text>
<use href="#check" x="623" y="962.94"/>
<path d="M184.5,1001.27 L195,1001.27" stroke="#9a9a9a" stroke-width="1" stroke-dasharray="1.2,1.2"/>
<use href="#eyeH" y="801.522"/>
<use href="#bodyIco" y="801.522"/>
<text x="251.3" y="1009.32" font-size="20.3" fill="#999999" textLength="78.5" lengthAdjust="spacingAndGlyphs">Body (74)</text>
<text x="337.4" y="1009.32" font-size="20.3" fill="#999999" textLength="234.6" lengthAdjust="spacingAndGlyphs">&quot;U17_FBGA96_DDR3_6200...</text>
<use href="#check" x="623" y="992.62"/>
<path d="M184.5,1030.96 L195,1030.96" stroke="#9a9a9a" stroke-width="1" stroke-dasharray="1.2,1.2"/>
<use href="#eyeH" y="831.208"/>
<use href="#bodyIco" y="831.208"/>
<text x="251.3" y="1039.01" font-size="20.3" fill="#999999" textLength="78.5" lengthAdjust="spacingAndGlyphs">Body (75)</text>
<text x="337.4" y="1039.01" font-size="20.3" fill="#999999" textLength="234.6" lengthAdjust="spacingAndGlyphs">&quot;U18_FBGA96_DDR3_6200...</text>
<use href="#check" x="623" y="1022.31"/>
<path d="M184.5,1060.64 L195,1060.64" stroke="#9a9a9a" stroke-width="1" stroke-dasharray="1.2,1.2"/>
<use href="#eyeH" y="860.894"/>
<use href="#bodyIco" y="860.894"/>
<text x="251.3" y="1068.69" font-size="20.3" fill="#999999" textLength="78.5" lengthAdjust="spacingAndGlyphs">Body (76)</text>
<text x="337.4" y="1068.69" font-size="20.3" fill="#999999" textLength="234.6" lengthAdjust="spacingAndGlyphs">&quot;U19_FBGA96_DDR3_6200...</text>
<use href="#check" x="623" y="1051.99"/>
</g>
<rect x="658" y="184.5" width="27.5" height="867.5" fill="#efefef"/>
<rect x="684.8" y="184.5" width="1" height="867.5" fill="#e2e2e2"/>
<path d="M665.8,201 L671.6,195.8 L677.4,201 L677.4,205.3 L671.6,200.1 L665.8,205.3 Z" fill="#545454"/>
<rect x="658.4" y="910.5" width="25.4" height="141.5" fill="#c9c9c9"/>
<path d="M721,910.5 L721,255 L1099.2,255 L1099.2,910.5" fill="none" stroke="#a6a6a6" stroke-width="1.5"/>
<linearGradient id="gSplit" x1="0" y1="0" x2="0" y2="1"><stop offset="0" stop-color="#b0b3c4"/><stop offset="0.6" stop-color="#9296ac"/><stop offset="0.75" stop-color="#6e7289"/><stop offset="1" stop-color="#6e7289"/></linearGradient>
<rect x="721.5" y="340.1" width="178.4" height="3.8" fill="url(#gSplit)"/>
<rect x="920.1" y="340.1" width="178.4" height="3.8" fill="url(#gSplit)"/>
<path d="M902.6999999999999,342.9 L904.3,341.2 L905.9,342.9 Z" fill="#4e4890" stroke="#6a66a8" stroke-width="0.5"/>
<path d="M908.5,342.9 L910.1,341.2 L911.7,342.9 Z" fill="#4e4890" stroke="#6a66a8" stroke-width="0.5"/>
<path d="M914.3,342.9 L915.9,341.2 L917.5,342.9 Z" fill="#4e4890" stroke="#6a66a8" stroke-width="0.5"/>
<g>
<path d="M721.6,279 L721.6,268.2 L723.8,265.6 L727.6,265.6 L727.6,279 Z" fill="#f8d000" stroke="#111" stroke-width="1.1" stroke-linejoin="round"/>
<path d="M721.9,279.2 L726.4,271.6 L731,271.4 L737.6,276 L735.6,279.2 Z" fill="url(#gFold)" stroke="#111" stroke-width="1.1" stroke-linejoin="round"/>
<path d="M722.3,278.6 L722.3,268.4" stroke="#111" stroke-width="1.5"/>
</g>
<use href="#projIco" x="726.2" y="260.4" opacity="0.9"/>
<text x="748.9" y="276.00" font-size="14.1" fill="#2a2a2a" textLength="44.5" lengthAdjust="spacingAndGlyphs">Projects</text>
<path d="M733.6,281 L733.6,288" stroke="#cdcdcd" stroke-width="1"/>
<use href="#expander" x="727" y="288"/>
<path d="M740,294.3 L747,294.3" stroke="#cdcdcd" stroke-width="1"/>
<g>
<rect x="749.3" y="283.2" width="3.6" height="21.6" fill="#c8c8c8" stroke="#333" stroke-width="1"/>
<path d="M752.9,289.6 L759.5,289.6 M752.9,293.2 L759.5,293.2" stroke="#333" stroke-width="1"/>
<rect x="753" y="290.1" width="6.5" height="2.6" fill="#c8c8c8"/>
<rect x="758.8" y="287.6" width="7.6" height="7.2" rx="1" fill="#ffe040" stroke="#333" stroke-width="1"/>
<rect x="761.6" y="290.6" width="7" height="6.6" rx="1" fill="#ffd000" stroke="#333" stroke-width="1"/>
</g>
<text x="774.6" y="299.00" font-size="14.1" fill="#2a2a2a" textLength="42.6" lengthAdjust="spacingAndGlyphs">model1</text>
<path d="M759,305 L759,318 L773,318" fill="none" stroke="#cdcdcd" stroke-width="1"/>
<use href="#projIco" x="775.2" y="310"/>
<text x="800" y="322.50" font-size="14.1" font-weight="bold" fill="#111" textLength="60.2" lengthAdjust="spacingAndGlyphs">Project(1)</text>
<clipPath id="cpTree"><rect x="722" y="344" width="376" height="566.5"/></clipPath><g clip-path="url(#cpTree)">
<path d="M733.7,366 L733.7,373.5" stroke="#cdcdcd" stroke-width="1"/>
<path d="M759.2,390 L759.2,866" stroke="#cdcdcd" stroke-width="1"/>
<path d="M733.7,386 L733.7,910.5" stroke="#cdcdcd" stroke-width="1"/>
<path d="M784.8,460 L784.8,755.6" stroke="#cdcdcd" stroke-width="1"/>
<path d="M784.8,883 L784.8,895.5" stroke="#cdcdcd" stroke-width="1"/>
</g>
<use href="#projIco" x="724.10" y="348.30"/>
<text x="748.9" y="360.80" font-size="14.1" fill="#2a2a2a" textLength="53.5" lengthAdjust="spacingAndGlyphs">Project(1)</text>
<use href="#expander" x="727.2" y="372.74"/>
<path d="M740.2,379.24 L747.2,379.24" stroke="#cdcdcd" stroke-width="1"/>
<g transform="translate(750.00,370.04)">
<path d="M0.5,5.8 L7,5.8 L7,17.5 L0.5,17.5 Z" fill="url(#gFold)" stroke="#222" stroke-width="1"/>
<path d="M7,0.5 L14.5,0.5 L16.7,2.7 L16.7,9 L7,9 Z" fill="#ffffff" stroke="#222" stroke-width="1"/>
<path d="M8.5,6.5 L15,6.5" stroke="#333" stroke-width="0.9"/>
<path d="M4,2.5 L7,4" stroke="#333" stroke-width="1"/>
<path d="M1,17.5 L6,9.5 L18.8,9.5 L13.7,17.5 Z" fill="url(#gFold)" stroke="#222" stroke-width="1.1" stroke-linejoin="round"/>
</g>
<text x="774.6" y="384.24" font-size="14.1" fill="#2a2a2a" textLength="60.6" lengthAdjust="spacingAndGlyphs">Input Data</text>
<path d="M759.2,402.67 L772.7,402.67" stroke="#cdcdcd" stroke-width="1"/>
<g>
<linearGradient id="gDom" x1="0" y1="0" x2="1" y2="1"><stop offset="0" stop-color="#ffd820"/><stop offset="0.5" stop-color="#fff8b0"/><stop offset="1" stop-color="#ffd000"/></linearGradient>
<path d="M776.3,394.1 L789.8,394.1 L793,396.8 L793,411.4 L779.3,411.4 L776.3,407.8 Z" fill="#38a828"/>
<rect x="777.2" y="395" width="12" height="12" fill="url(#gDom)"/>
<path d="M790.2,395.8 L792.1,397.6 L792.1,409.5 L790.2,407.6 Z" fill="#ffc000"/>
<path d="M777.8,408.2 L789.8,408.2 L791.8,410.4 L780,410.4 Z" fill="#ffe040"/>
</g>
<text x="800.1" y="407.67" font-size="14.1" fill="#2a2a2a" textLength="135.7" lengthAdjust="spacingAndGlyphs">Computational Domain</text>
<path d="M759.2,426.11 L772.7,426.11" stroke="#cdcdcd" stroke-width="1"/>
<g>
<linearGradient id="gFl" x1="0" y1="0" x2="1" y2="1"><stop offset="0" stop-color="#fff8a0"/><stop offset="0.5" stop-color="#ffc800"/><stop offset="1" stop-color="#ff9800"/></linearGradient>
<path d="M775.5,418.3 L787.3,418.3 L792.7,424 L792.7,434.5 L780.8,434.5 L775.5,429.6 Z" fill="#40b030"/>
<rect x="776.4" y="419.2" width="10.8" height="10" fill="url(#gFl)"/>
<path d="M787.6,419.6 L791.8,424.3 L791.8,433.3 L787.6,429.2 Z" fill="#fff890"/>
<path d="M776.6,429.9 L787.4,429.9 L791.4,433.8 L780.8,433.8 Z" fill="#ffe060"/>
<path d="M781.2,424 L786.4,424 L788.8,426.2 L788.8,431.5 L783.6,431.5 L781.2,429.3 Z" fill="#1a60c0" stroke="#001850" stroke-width="0.8"/>
<rect x="781.8" y="424.5" width="4.8" height="4.8" fill="#50b0ff"/>
</g>
<text x="800.1" y="431.11" font-size="14.1" fill="#2a2a2a" textLength="104.1" lengthAdjust="spacingAndGlyphs">Fluid Subdomains</text>
<use href="#expander" x="752.7" y="443.04"/>
<path d="M765.7,449.54 L772.7,449.54" stroke="#cdcdcd" stroke-width="1"/>
<use href="#matIco" x="776.70" y="442.24"/>
<text x="800.1" y="454.54" font-size="14.1" fill="#2a2a2a" textLength="84.1" lengthAdjust="spacingAndGlyphs">Solid Materials</text>
<path d="M784.8,472.98 L798.3,472.98" stroke="#cdcdcd" stroke-width="1"/>
<use href="#matIco" x="802.20" y="465.68"/>
<text x="825.6" y="477.98" font-size="14.1" fill="#2a2a2a" textLength="111.3" lengthAdjust="spacingAndGlyphs">Copper_FR4_37.9_s</text>
<path d="M784.8,496.41 L798.3,496.41" stroke="#cdcdcd" stroke-width="1"/>
<use href="#matIco" x="802.20" y="489.11"/>
<text x="825.6" y="501.41" font-size="14.1" fill="#2a2a2a" textLength="103.6" lengthAdjust="spacingAndGlyphs">Copper_FR4_2.9_s</text>
<path d="M784.8,519.85 L798.3,519.85" stroke="#cdcdcd" stroke-width="1"/>
<use href="#matIco" x="802.20" y="512.55"/>
<text x="825.6" y="524.85" font-size="14.1" fill="#2a2a2a" textLength="111.3" lengthAdjust="spacingAndGlyphs">Copper_FR4_91.3_s</text>
<path d="M784.8,543.28 L798.3,543.28" stroke="#cdcdcd" stroke-width="1"/>
<use href="#matIco" x="802.20" y="535.98"/>
<text x="825.6" y="548.28" font-size="14.1" fill="#2a2a2a" textLength="111.3" lengthAdjust="spacingAndGlyphs">Copper_FR4_28.9_s</text>
<path d="M784.8,566.72 L798.3,566.72" stroke="#cdcdcd" stroke-width="1"/>
<use href="#matIco" x="802.20" y="559.42"/>
<text x="825.6" y="571.72" font-size="14.1" fill="#2a2a2a" textLength="111.3" lengthAdjust="spacingAndGlyphs">Copper_FR4_91.2_s</text>
<path d="M784.8,590.15 L798.3,590.15" stroke="#cdcdcd" stroke-width="1"/>
<use href="#matIco" x="802.20" y="582.85"/>
<text x="825.6" y="595.15" font-size="14.1" fill="#2a2a2a" textLength="111.3" lengthAdjust="spacingAndGlyphs">Copper_FR4_12.7_s</text>
<path d="M784.8,613.59 L798.3,613.59" stroke="#cdcdcd" stroke-width="1"/>
<use href="#matIco" x="802.20" y="606.29"/>
<text x="825.6" y="618.59" font-size="14.1" fill="#2a2a2a" textLength="111.3" lengthAdjust="spacingAndGlyphs">Copper_FR4_87.6_s</text>
<path d="M784.8,637.02 L798.3,637.02" stroke="#cdcdcd" stroke-width="1"/>
<use href="#matIco" x="802.20" y="629.72"/>
<text x="825.6" y="642.02" font-size="14.1" fill="#2a2a2a" textLength="111.3" lengthAdjust="spacingAndGlyphs">Copper_FR4_90.4_s</text>
<path d="M784.8,660.45 L798.3,660.45" stroke="#cdcdcd" stroke-width="1"/>
<use href="#matIco" x="802.20" y="653.15"/>
<text x="825.6" y="665.45" font-size="14.1" fill="#2a2a2a" textLength="111.3" lengthAdjust="spacingAndGlyphs">Copper_FR4_17.3_s</text>
<path d="M784.8,683.89 L798.3,683.89" stroke="#cdcdcd" stroke-width="1"/>
<use href="#matIco" x="802.20" y="676.59"/>
<text x="825.6" y="688.89" font-size="14.1" fill="#2a2a2a" textLength="110.8" lengthAdjust="spacingAndGlyphs">Copper_FR4_29.6_s</text>
<path d="M784.8,707.33 L798.3,707.33" stroke="#cdcdcd" stroke-width="1"/>
<use href="#matIco" x="802.20" y="700.03"/>
<text x="825.6" y="712.33" font-size="14.1" fill="#2a2a2a" textLength="110.8" lengthAdjust="spacingAndGlyphs">Copper_FR4_37.5_s</text>
<path d="M784.8,730.76 L798.3,730.76" stroke="#cdcdcd" stroke-width="1"/>
<use href="#matIco" x="802.20" y="723.46"/>
<rect x="824" y="719.5" width="247" height="22.8" fill="#0078d7"/>
<text x="825.6" y="735.76" font-size="14.1" fill="#ffffff" textLength="243.6" lengthAdjust="spacingAndGlyphs">Copper_FR4_1.75297861321564_Solder_d</text>
<path d="M784.8,754.19 L798.3,754.19" stroke="#cdcdcd" stroke-width="1"/>
<use href="#matIco" x="802.20" y="746.89"/>
<text x="825.6" y="759.19" font-size="14.1" fill="#2a2a2a" textLength="129.8" lengthAdjust="spacingAndGlyphs">Typical Plastic Package</text>
<path d="M759.2,777.63 L772.7,777.63" stroke="#cdcdcd" stroke-width="1"/>
<g>
<linearGradient id="gBc" x1="0" y1="0" x2="0" y2="1"><stop offset="0" stop-color="#ffe840"/><stop offset="1" stop-color="#e0a800"/></linearGradient>
<rect x="778.9" y="775.2" width="9.5" height="9.2" fill="url(#gBc)" stroke="#222" stroke-width="1"/>
<path d="M788.4,775.6 L790.2,776.6 L790.2,785 L788.4,784.4 Z" fill="#d8a000" stroke="#222" stroke-width="0.8"/>
<path d="M777.8,773.2 L782.4,777.6" stroke="#10a020" stroke-width="1.3"/>
<circle cx="782.2" cy="777.6" r="1.5" fill="#10a020"/>
<path d="M785.3,777.6 L790.4,772.2" stroke="#e02020" stroke-width="1.3"/>
<path d="M788,772.2 L790.8,771.9 L790.6,774.6" fill="#e02020" stroke="#e02020" stroke-width="0.8"/>
</g>
<text x="800.1" y="782.63" font-size="14.1" fill="#2a2a2a" textLength="121.5" lengthAdjust="spacingAndGlyphs">Boundary Conditions</text>
<path d="M759.2,801.07 L772.7,801.07" stroke="#cdcdcd" stroke-width="1"/>
<g>
<path d="M776.5,795.6 C783.8,795.6 783.8,806.6 776.5,806.6 Z" fill="#fff6a0" stroke="#333" stroke-width="1"/>
<path d="M792.2,795.6 C785.6,795.6 785.6,806.6 792.2,806.6 Z" fill="#ffb0c0" stroke="#333" stroke-width="1"/>
<path d="M781.2,794.6 L787,794.6 M781.6,807.2 L787.4,807.2" stroke="#f03030" stroke-width="1.2"/>
<path d="M785.4,793 L787.6,794.6 L785.4,796.2 M783.2,805.6 L781,807.2 L783.2,808.8" fill="none" stroke="#f03030" stroke-width="1.1"/>
</g>
<text x="800.1" y="806.07" font-size="14.1" fill="#2a2a2a" textLength="103.7" lengthAdjust="spacingAndGlyphs">Radiative Surfaces</text>
<path d="M759.2,824.50 L772.7,824.50" stroke="#cdcdcd" stroke-width="1"/>
<g>
<linearGradient id="gTh" x1="0" y1="0" x2="0" y2="1"><stop offset="0" stop-color="#fff060"/><stop offset="1" stop-color="#f0b000"/></linearGradient>
<path d="M776.2,818.5 L778.4,816.3 L791.5,816.3 L793,818.2 L793,833 L778.6,833 L776.2,830.4 Z" fill="#111"/>
<path d="M777.2,818.6 L778.8,817.2 L791.2,817.2 L792,818.6 L792,820 L777.2,820 Z" fill="#ffe840"/>
<rect x="778.8" y="820.2" width="13.2" height="12" fill="url(#gTh)"/>
<path d="M777.2,820.2 L778.6,821.4 L778.6,832 L777.2,830.4 Z" fill="#ffe040"/>
<path d="M778.8,825 L781.5,825 L781.5,828.6 L789.2,828.6 L789.2,825 L792,825 L792,832.2 L778.8,832.2 Z" fill="#30c030"/>
<path d="M777.2,825 L778.6,826 L778.6,832 L777.2,830.4 Z" fill="#20a020"/>
<path d="M777,823.6 L781.5,825 L781.5,828.6 L789.2,828.6 L789.2,825 L792.2,825" fill="none" stroke="#ff4000" stroke-width="1.1"/>
</g>
<text x="800.1" y="829.50" font-size="14.1" fill="#2a2a2a" textLength="115.0" lengthAdjust="spacingAndGlyphs">Thermal Resistances</text>
<path d="M759.2,847.93 L772.7,847.93" stroke="#cdcdcd" stroke-width="1"/>
<g>
<rect x="777.9" y="840.9" width="9.4" height="9" fill="#f4f030"/>
<path d="M777.9,840.9 h2.35v2.25h-2.35z M782.6,840.9 h2.35v2.25h-2.35z M780.25,843.15 h2.35v2.25h-2.35z M784.95,843.15 h2.35v2.25h-2.35z M777.9,845.4 h2.35v2.25h-2.35z M782.6,845.4 h2.35v2.25h-2.35z M780.25,847.65 h2.35v2.25h-2.35z M784.95,847.65 h2.35v2.25h-2.35z" fill="#111"/>
<path d="M778.3,849.5 L778.1,855" stroke="#444" stroke-width="1.1"/>
</g>
<text x="800.1" y="852.93" font-size="14.1" fill="#2a2a2a" textLength="31.6" lengthAdjust="spacingAndGlyphs">Goals</text>
<use href="#expander" x="752.7" y="864.87"/>
<path d="M765.7,871.37 L772.7,871.37" stroke="#cdcdcd" stroke-width="1"/>
<g transform="translate(775.20,862.27)">
<path d="M0.4,0.3 L14.1,0.3 L17.8,4.3 L17.8,17.4 L4.2,17.4 L0.4,13.8 Z" fill="#e8c030" stroke="#9a7a20" stroke-width="0.8" stroke-linejoin="round"/>
<rect x="0.8" y="0.7" width="13" height="12.8" fill="#ffe020"/>
<rect x="1" y="1" width="5.2" height="5.6" fill="#ffffb8"/>
<rect x="6.6" y="7.1" width="7" height="6.2" fill="#f8c810"/>
<path d="M14.1,0.8 L17.4,4.5 L17.4,16.8 L14.1,13.6 Z" fill="#fff080"/>
<path d="M1,13.9 L13.9,13.9 L17.2,17 L4.4,17 Z" fill="#ffe040"/>
<path d="M0.6,6.8 L13.8,6.8 M6.3,0.6 L6.3,13.7 M10.2,0.6 L10.2,6.8 M6.3,3.8 L13.8,3.8 M0.6,13.8 L13.9,13.8 L13.9,0.5 M14,3.8 L17.6,7.6 M14,6.8 L17.6,10.6" stroke="#7a5a10" stroke-width="0.85" fill="none"/>
</g>
<text x="800.1" y="876.37" font-size="14.1" fill="#2a2a2a" textLength="30.9" lengthAdjust="spacingAndGlyphs">Mesh</text>
<path d="M784.8,894.81 L798.3,894.81" stroke="#cdcdcd" stroke-width="1"/>
<g transform="translate(800.70,885.71)">
<path d="M0.4,0.3 L14.1,0.3 L17.8,4.3 L17.8,17.4 L4.2,17.4 L0.4,13.8 Z" fill="#e8c030" stroke="#9a7a20" stroke-width="0.8" stroke-linejoin="round"/>
<rect x="0.8" y="0.7" width="13" height="12.8" fill="#ffe020"/>
<rect x="1" y="1" width="5.2" height="5.6" fill="#ffffb8"/>
<rect x="6.6" y="7.1" width="7" height="6.2" fill="#f8c810"/>
<path d="M14.1,0.8 L17.4,4.5 L17.4,16.8 L14.1,13.6 Z" fill="#fff080"/>
<path d="M1,13.9 L13.9,13.9 L17.2,17 L4.4,17 Z" fill="#ffe040"/>
<path d="M0.6,6.8 L13.8,6.8 M6.3,0.6 L6.3,13.7 M10.2,0.6 L10.2,6.8 M6.3,3.8 L13.8,3.8 M0.6,13.8 L13.9,13.8 L13.9,0.5 M14,3.8 L17.6,7.6 M14,6.8 L17.6,10.6" stroke="#7a5a10" stroke-width="0.85" fill="none"/>
</g>
<text x="825.6" y="899.81" font-size="14.1" fill="#2a2a2a" textLength="71.8" lengthAdjust="spacingAndGlyphs">Global Mesh</text>
<rect x="750.5" y="909.2" width="5" height="1.3" fill="#444"/>
<rect x="1107" y="254.5" width="1.3" height="656" fill="#b5b5b5"/>
<clipPath id="cpView"><rect x="1108" y="256" width="871" height="655"/></clipPath>
<g clip-path="url(#cpView)">
<polygon points="1462.50,327.90 1108.00,473.90 1108.00,530.60 1460.40,385.40" fill="#7b8284"/>
<polygon points="1462.50,327.90 1979.00,452.50 1979.00,510.10 1460.40,385.40" fill="#b5bfc3"/>
<polygon points="1460.40,385.40 1108.00,530.60 1108.00,732.30 1692.10,872.40 1979.00,753.70 1979.00,510.10" fill="#6a6e6f"/>
<path d="M1108,473.9 L1462.5,327.9 L1979,452.5 M1462.5,327.9 L1460.4,385.4 M1108,530.6 L1460.4,385.4 L1979,510.1 M1108,732.3 L1692.1,872.4 L1979,753.7" fill="none" stroke="#3c4242" stroke-width="1"/>
<polygon points="1511.60,609.20 1241.70,719.00 1635.30,814.60 1906.80,702.60" fill="#925b25" stroke="#ff9f3c" stroke-width="1.8" stroke-linejoin="round"/>
<polygon points="1513.60,525.30 1243.20,636.70 1241.70,719.00 1511.60,609.20" fill="#c27a32"/>
<polygon points="1513.60,525.30 1909.60,620.80 1906.80,702.60 1511.60,609.20" fill="#ffbd55"/>
<polygon points="1513.60,525.30 1243.20,636.70 1243.14,640.13 1513.52,528.80" fill="#ff9f3c"/>
<polygon points="1513.60,525.30 1909.60,620.80 1909.48,624.21 1513.52,528.80" fill="#ff9f3c"/>
<polygon points="1513.40,533.59 1243.05,644.83 1242.99,648.46 1513.31,537.29" fill="#ff9f3c"/>
<polygon points="1513.40,533.59 1909.32,628.88 1909.20,632.49 1513.31,537.29" fill="#ff9f3c"/>
<polygon points="1513.05,548.27 1242.79,659.23 1242.73,662.66 1512.97,551.77" fill="#ff9f3c"/>
<polygon points="1513.05,548.27 1908.83,643.20 1908.72,646.61 1512.97,551.77" fill="#ff9f3c"/>
<polygon points="1512.89,555.26 1242.66,666.09 1242.59,670.01 1512.79,559.26" fill="#ff9f3c"/>
<polygon points="1512.89,555.26 1908.60,650.01 1908.47,653.91 1512.79,559.26" fill="#ff9f3c"/>
<polygon points="1512.73,561.76 1242.55,672.46 1242.49,675.40 1512.66,564.75" fill="#ff9f3c"/>
<polygon points="1512.73,561.76 1908.38,656.34 1908.28,659.27 1512.66,564.75" fill="#ff9f3c"/>
<polygon points="1512.49,571.74 1242.37,682.26 1242.32,685.20 1512.42,574.74" fill="#ff9f3c"/>
<polygon points="1512.49,571.74 1908.05,666.08 1907.95,669.00 1512.42,574.74" fill="#ff9f3c"/>
<polygon points="1512.37,576.74 1242.28,687.16 1242.22,690.29 1512.30,579.93" fill="#ff9f3c"/>
<polygon points="1512.37,576.74 1907.88,670.95 1907.78,674.07 1512.30,579.93" fill="#ff9f3c"/>
<polygon points="1512.05,590.22 1242.04,700.38 1241.98,703.81 1511.97,593.72" fill="#ff9f3c"/>
<polygon points="1512.05,590.22 1907.43,684.10 1907.32,687.51 1511.97,593.72" fill="#ff9f3c"/>
<polygon points="1511.89,597.21 1241.91,707.24 1241.86,710.18 1511.81,600.21" fill="#ff9f3c"/>
<polygon points="1511.89,597.21 1907.20,690.91 1907.10,693.84 1511.81,600.21" fill="#ff9f3c"/>
<polygon points="1511.79,601.21 1241.84,711.16 1241.79,714.10 1511.72,604.21" fill="#ff9f3c"/>
<polygon points="1511.79,601.21 1907.07,694.81 1906.97,697.73 1511.72,604.21" fill="#ff9f3c"/>
<polygon points="1511.68,605.70 1241.76,715.57 1241.70,719.00 1511.60,609.20" fill="#ff9f3c"/>
<polygon points="1511.68,605.70 1906.92,699.19 1906.80,702.60 1511.60,609.20" fill="#ff9f3c"/>
<path d="M1243.20,636.70 1513.60,525.30 1909.60,620.80 M1513.60,525.30 1511.60,609.20 M1243.20,636.70 1241.70,719.00 M1909.60,620.80 1906.80,702.60" fill="none" stroke="#ff9f3c" stroke-width="2" stroke-linejoin="round"/>
</g>
<rect x="1107" y="254.5" width="872" height="1.7" fill="#1f6d94"/>
</svg></body></html>
